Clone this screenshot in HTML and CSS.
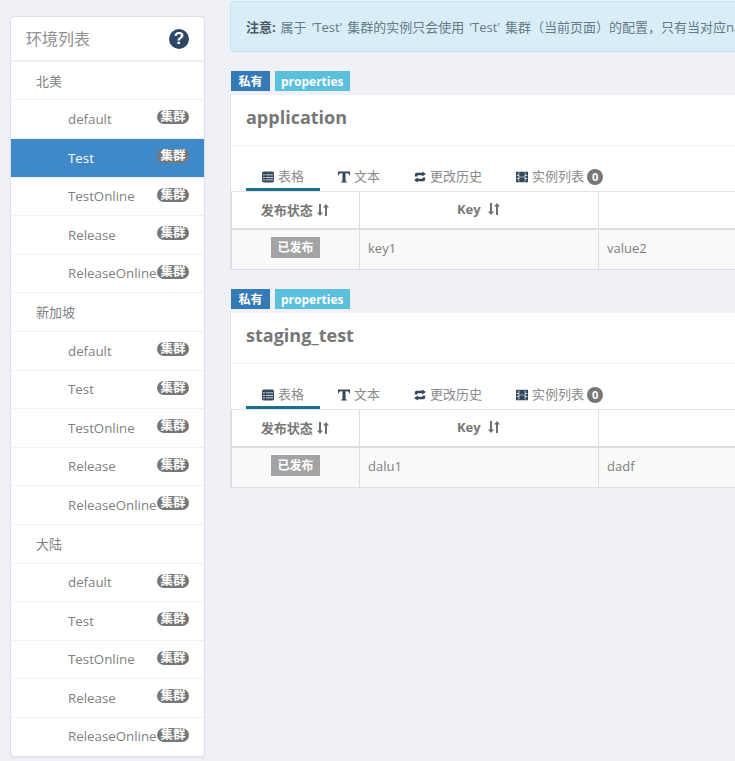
FILE: index.html
```html
<!DOCTYPE html>
<html lang="en">
<head>
    <meta charset="UTF-8">
    <title>环境列表</title>
    <link rel="stylesheet" href="styles.css">
</head>
<body>
    <svg class="sprites" width="0" height="0">
        <symbol id="i-table" viewBox="0 0 14 14"><path fill-rule="evenodd" d="M2 .5h10A2 2 0 0 1 14 2.500v9a2 2 0 0 1-2 2H2a2 2 0 0 1-2-2v-9a2 2 0 0 1 2-2zM1 4v.9h2.500V4zm3.500 0v.9H13V4zM1 7v.9h2.500V7zm3.500 0v.9H13V7zM1 10v.9h2.500V10zm3.500 0v.9H13V10z"/></symbol>
        <symbol id="i-font" viewBox="0 0 14 14"><path d="M0 .5h14v4.500h-1c-.3-1.700-1-2.500-2.500-2.500H8.800v9c0 .6.400.8 1.500.9v1.100H3.700v-1.100c1.100-.1 1.500-.3 1.500-.9v-9H3.500C2 2.500 1.300 3.300 1 5H0z"/></symbol>
        <symbol id="i-swap" viewBox="0 0 14 14"><path d="M1 6.500V4a2 2 0 0 1 2-2h6.500V.5L14 3.500l-4.500 3V5H4v1.500zM13 7.500V10a2 2 0 0 1-2 2H4.500v1.500L0 10.500l4.500-3V9H10V7.500z"/></symbol>
        <symbol id="i-film" viewBox="0 0 14 14"><path fill-rule="evenodd" d="M0 1h14v12H0zM3 1.800v10.400h.8V1.800zm7.200 0v10.400h.8V1.800zM.8 4.600v.8H3v-.8zm0 4v.8H3v-.8zm10.200-4v.8h2.200v-.8zm0 4v.8h2.200v-.8zM3.800 6.600v.8h6.400v-.8z"/></symbol>
        <symbol id="i-sort" viewBox="0 0 14 14"><path d="M3 1h2v8.500h2L4 13 1 9.500h2zM9 13h2V4.500h2L10 1 7 4.500h2z"/></symbol>
    </svg>

    <div class="page">
        <aside class="sidebar">
            <div class="sidebar-head">
                <span>环境列表</span>
                <span class="help">?</span>
            </div>
            <ul class="env-list">
                <li class="env-dc">北美</li>
                <li class="env-item"><span>default</span><span class="badge">集群</span></li>
                <li class="env-item active"><span>Test</span><span class="badge">集群</span></li>
                <li class="env-item"><span>TestOnline</span><span class="badge">集群</span></li>
                <li class="env-item"><span>Release</span><span class="badge">集群</span></li>
                <li class="env-item"><span>ReleaseOnline</span><span class="badge">集群</span></li>
                <li class="env-dc">新加坡</li>
                <li class="env-item"><span>default</span><span class="badge">集群</span></li>
                <li class="env-item"><span>Test</span><span class="badge">集群</span></li>
                <li class="env-item"><span>TestOnline</span><span class="badge">集群</span></li>
                <li class="env-item"><span>Release</span><span class="badge">集群</span></li>
                <li class="env-item"><span>ReleaseOnline</span><span class="badge">集群</span></li>
                <li class="env-dc">大陆</li>
                <li class="env-item"><span>default</span><span class="badge">集群</span></li>
                <li class="env-item"><span>Test</span><span class="badge">集群</span></li>
                <li class="env-item"><span>TestOnline</span><span class="badge">集群</span></li>
                <li class="env-item"><span>Release</span><span class="badge">集群</span></li>
                <li class="env-item"><span>ReleaseOnline</span><span class="badge">集群</span></li>
            </ul>
        </aside>

        <main class="main">
            <div class="alert"><b>注意:</b> 属于 'Test' 集群的实例只会使用 'Test' 集群（当前页面）的配置，只有当对应namespace在当前集群没有发布过配置时，才会使用父集群的配置。</div>

            <section class="namespace">
                <div class="tags"><span class="tag tag-private">私有</span><span class="tag tag-format">properties</span></div>
                <div class="panel">
                    <h2 class="panel-title">application</h2>
                    <div class="tabs">
                        <div class="tab active"><svg class="icon"><use href="#i-table"/></svg>表格</div>
                        <div class="tab"><svg class="icon"><use href="#i-font"/></svg>文本</div>
                        <div class="tab"><svg class="icon"><use href="#i-swap"/></svg>更改历史</div>
                        <div class="tab"><svg class="icon"><use href="#i-film"/></svg>实例列表<span class="count">0</span></div>
                    </div>
                    <table class="items">
                        <tr>
                            <th class="col-status">发布状态 <svg class="sort"><use href="#i-sort"/></svg></th>
                            <th class="col-key">Key <svg class="sort"><use href="#i-sort"/></svg></th>
                            <th></th>
                        </tr>
                        <tr>
                            <td class="col-status"><span class="published">已发布</span></td>
                            <td>key1</td>
                            <td>value2</td>
                        </tr>
                    </table>
                </div>
            </section>

            <section class="namespace">
                <div class="tags"><span class="tag tag-private">私有</span><span class="tag tag-format">properties</span></div>
                <div class="panel">
                    <h2 class="panel-title">staging_test</h2>
                    <div class="tabs">
                        <div class="tab active"><svg class="icon"><use href="#i-table"/></svg>表格</div>
                        <div class="tab"><svg class="icon"><use href="#i-font"/></svg>文本</div>
                        <div class="tab"><svg class="icon"><use href="#i-swap"/></svg>更改历史</div>
                        <div class="tab"><svg class="icon"><use href="#i-film"/></svg>实例列表<span class="count">0</span></div>
                    </div>
                    <table class="items">
                        <tr>
                            <th class="col-status">发布状态 <svg class="sort"><use href="#i-sort"/></svg></th>
                            <th class="col-key">Key <svg class="sort"><use href="#i-sort"/></svg></th>
                            <th></th>
                        </tr>
                        <tr>
                            <td class="col-status"><span class="published">已发布</span></td>
                            <td>dalu1</td>
                            <td>dadf</td>
                        </tr>
                    </table>
                </div>
            </section>
        </main>
    </div>
</body>
</html>
```

FILE: styles.css
```css
html, body {
    height: 100%;
    margin: 0;
    overflow: hidden;
}
body {
    font-family: "Open Sans", "Noto Sans CJK SC", sans-serif;
    font-size: 13px;
    color: #7f7f7f;
    background: #eff1f6;
}
.sprites {
    position: absolute;
}
.page {
    display: flex;
    width: 1100px;
}
.sidebar {
    flex: none;
    box-sizing: border-box;
    width: 195px;
    height: 741px;
    margin: 16px 0 0 10px;
    background: #fff;
    border: 1px solid #dcdfe4;
    border-radius: 4px;
    box-shadow: 0 1px 2px rgba(0, 0, 0, 0.05);
}
.sidebar-head {
    display: flex;
    justify-content: space-between;
    align-items: center;
    box-sizing: border-box;
    height: 44.8px;
    padding: 0 15px;
    font-size: 16px;
    color: #8f8f8f;
    border-bottom: 2px solid #eff1f6;
}
.help {
    width: 20px;
    height: 20px;
    margin-top: 2px;
    border-radius: 50%;
    background: #2c4763;
    color: #fff;
    font-family: "Liberation Sans", sans-serif;
    font-size: 17px;
    font-weight: bold;
    line-height: 20px;
    text-align: center;
}
.env-list {
    list-style: none;
    margin: 0;
    padding: 0;
}
.env-list li {
    box-sizing: border-box;
    height: 38.6px;
    border-bottom: 1px solid #eff1f6;
}
.env-list li:last-child {
    border-bottom: none;
}
.env-dc {
    padding: 9px 0 0 25px;
}
.env-item {
    display: flex;
    justify-content: space-between;
    padding: 9.6px 15px 0 57px;
    font-size: 13.3px;
}
.env-item.active {
    background: #3f89c9;
    color: #fff;
}
.badge {
    flex: none;
    width: 32px;
    height: 14px;
    margin-top: 0.4px;
    border-radius: 7px;
    background: #777;
    color: #fff;
    font-size: 12.5px;
    font-weight: bold;
    line-height: 14px;
    text-align: center;
}
.main {
    flex: none;
    width: 860px;
    margin-left: 25px;
}
.alert {
    box-sizing: border-box;
    height: 51px;
    margin-top: 1px;
    padding: 16px 15px;
    line-height: 18px;
    white-space: nowrap;
    word-spacing: 1.5px;
    overflow: hidden;
    color: #657a86;
    background: #d9edf7;
    border: 1px solid #bce8f1;
    border-radius: 4px;
}
.alert b {
    color: #4a5a63;
}
.namespace {
    margin-top: 19px;
}
.tags {
    display: flex;
    gap: 5px;
    height: 24px;
    padding-left: 1px;
}
.tag {
    height: 20px;
    color: #fff;
    font-size: 12px;
    font-weight: bold;
    line-height: 21px;
}
.tag-private {
    padding: 0 7.5px;
    background: #337ab7;
}
.tag-format {
    padding: 0 6px;
    background: #5bc0de;
}
.panel {
    box-sizing: border-box;
    height: 175px;
    background: #fff;
    border-left: 1px solid #dcdfe4;
    border-bottom: 1px solid #dcdfe4;
}
.panel-title {
    box-sizing: border-box;
    height: 51px;
    margin: 0;
    padding: 9px 15px 0;
    font-size: 18px;
    font-weight: 700;
    line-height: 26px;
    color: #777;
    border-bottom: 1px solid #eff1f6;
}
.tabs {
    display: flex;
    gap: 2px;
    box-sizing: border-box;
    height: 46px;
    padding: 19px 0 0 15px;
    border-bottom: 1px solid #e4e4e4;
}
.tab {
    display: flex;
    align-items: center;
    box-sizing: border-box;
    height: 26px;
    padding: 0 16px 2px;
    color: #8a8a8a;
    border-bottom: 3px solid transparent;
}
.tab.active {
    border-bottom-color: #1a6f8a;
}
.icon {
    flex: none;
    width: 12px;
    height: 12px;
    margin: 2px 4px 0 0;
    fill: #34495e;
}
.count {
    width: 16px;
    height: 16px;
    margin: 3px 0 0 3px;
    border-radius: 50%;
    background: #777;
    color: #fff;
    font-size: 11px;
    font-weight: bold;
    line-height: 16px;
    text-align: center;
}
.items {
    border-collapse: collapse;
    table-layout: fixed;
    width: 700px;
}
.items th, .items td {
    box-sizing: border-box;
    padding: 0 8px;
    border: 1px solid #ddd;
    border-top: none;
    border-bottom: none;
    text-align: left;
}
.items tr:first-child th {
    height: 37px;
    padding-bottom: 2px;
    border-bottom: 2px solid #ddd;
    text-align: center;
    color: #777;
}
.items td {
    height: 40px;
    padding-bottom: 4px;
    background: #f9f9f9;
}
.items .col-status {
    width: 128px;
    text-align: center;
}
.items .col-key {
    width: 239px;
    word-spacing: 3px;
}
.items th:last-child, .items td:last-child {
    border-right: none;
}
.sort {
    width: 14px;
    height: 14px;
    vertical-align: -2px;
    fill: #6f6f6f;
}
.published {
    display: inline-block;
    padding: 0 6px;
    background: #a3a3a3;
    color: #fff;
    font-size: 12px;
    font-weight: bold;
    line-height: 21px;
}
```
